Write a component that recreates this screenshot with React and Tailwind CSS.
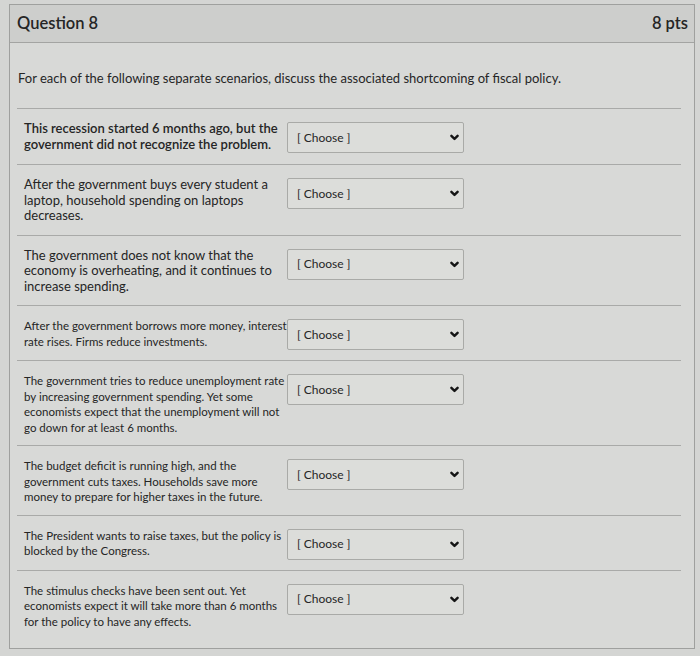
import React from "react";

const rows = [
  { text: ["This recession started 6 months ago, but the", "government did not recognize the problem."], bold: true },
  { text: ["After the government buys every student a", "laptop, household spending on laptops", "decreases."] },
  { text: ["The government does not know that the", "economy is overheating, and it continues to", "increase spending."] },
  { text: ["After the government borrows more money, interest", "rate rises. Firms reduce investments."], small: true },
  { text: ["The government tries to reduce unemployment rate", "by increasing government spending. Yet some", "economists expect that the unemployment will not", "go down for at least 6 months."], small: true },
  { text: ["The budget deficit is running high, and the", "government cuts taxes. Households save more", "money to prepare for higher taxes in the future."], small: true },
  { text: ["The President wants to raise taxes, but the policy is", "blocked by the Congress."], small: true },
  { text: ["The stimulus checks have been sent out. Yet", "economists expect it will take more than 6 months", "for the policy to have any effects."], small: true },
];

function Chevron() {
  return (
    <svg width="9" height="7" viewBox="0 0 9 7" className="shrink-0">
      <path d="M1.4 1.8 L4.5 4.9 L7.6 1.8" fill="none" stroke="#151515" strokeWidth="2.4" strokeLinecap="round" strokeLinejoin="round" />
    </svg>
  );
}

function Select() {
  return (
    <div className="w-[177px] h-[31px] shrink-0 border border-[#a9aaa7] bg-[#dcddda] flex items-center justify-between pl-[9px] pr-[4px] rounded-[2px]">
      <span className="text-[12px] text-[#262626]">[ Choose ]</span>
      <Chevron />
    </div>
  );
}

export default function App() {
  return (
    <div className="w-[700px] h-[656px] bg-[#d4d5d3] pt-[4px] pl-[9px] pr-[5px]" style={{ fontFamily: "Lato, 'Open Sans', sans-serif" }}>
      <div className="h-[645px] border border-[#9fa09e] bg-[#d8d9d7] text-[#252525]">
        <div className="h-[38px] bg-[#cdcecc] border-b border-[#a3a4a2] flex items-center justify-between pl-[7px] pr-[6px]">
          <span className="text-[16.5px] font-semibold">Question 8</span>
          <span className="text-[16.5px] font-semibold">8 pts</span>
        </div>
        <div className="px-[7px]">
          <p className="pt-[26px] pb-[21px] pl-[1px] text-[13px] leading-[18px] text-[#262626]">
            For each of the following separate scenarios, discuss the associated shortcoming of fiscal policy.
          </p>
          <div className="mr-[6px]">
            {rows.map((r, i) => (
              <div key={i} className={`border-t border-[#a9aaa8] flex items-start pt-[12px] pl-[7px] ${r.small ? "pb-[10px]" : "pb-[11px]"}`}>
                <div className={`w-[263px] shrink-0 leading-[15.5px] ${r.small ? "text-[11.5px]" : "text-[13px]"} ${r.bold ? "font-semibold" : ""}`}>
                  {r.text.map((t, j) => (
                    <div key={j} className="whitespace-nowrap">{t}</div>
                  ))}
                </div>
                <div className="pt-[1px]">
                  <Select />
                </div>
              </div>
            ))}
          </div>
        </div>
      </div>
    </div>
  );
}
